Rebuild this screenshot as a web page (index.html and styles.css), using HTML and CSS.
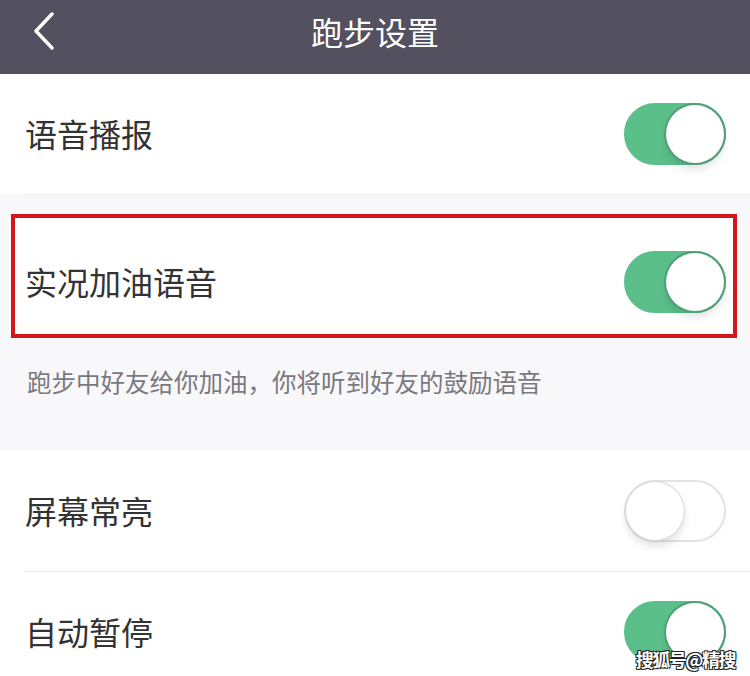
FILE: index.html
```html
<!doctype html>
<html>
<head>
<meta charset="utf-8">
<meta name="viewport" content="width=device-width, initial-scale=1.0">
<link rel="stylesheet" href="styles.css">
<title>跑步设置</title>
</head>
<body>
<div class="nav">
    <svg class="back" width="30" height="40" viewBox="0 0 30 40">
        <polyline points="19,2 3,19 19,36" fill="none" stroke="#fff" stroke-width="3.4" stroke-linecap="round" stroke-linejoin="round"/>
    </svg>
    <span class="title">跑步设置</span>
</div>

<div class="group">
    <div class="row">
        <span class="label">语音播报</span>
        <span class="switch on"><i></i></span>
    </div>
</div>
<div class="divider"></div>

<div class="gap"></div>
<div class="row marked">
    <span class="label">实况加油语音</span>
    <span class="switch on"><i></i></span>
</div>
<p class="caption">跑步中好友给你加油，你将听到好友的鼓励语音</p>

<div class="group">
    <div class="row tall">
        <span class="label">屏幕常亮</span>
        <span class="switch"><i></i></span>
    </div>
    <div class="divider"></div>
    <div class="row">
        <span class="label">自动暂停</span>
        <span class="switch on"><i></i></span>
    </div>
</div>

<div class="mark">搜狐号@精搜</div>
</body>
</html>
```

FILE: styles.css
```css
html, body {
    margin: 0;
    padding: 0;
}
body {
    width: 750px;
    height: 676px;
    overflow: hidden;
    position: relative;
    background-color: #f8f7fa;
    font-family: "Noto Sans CJK SC", "Noto Sans", sans-serif;
    color: #333;
}
.nav {
    height: 74px;
    background-color: #535060;
    display: flex;
    align-items: center;
    justify-content: center;
    position: relative;
}
.nav .back {
    position: absolute;
    left: 33px;
    top: 12px;
}
.nav .title {
    color: #fff;
    font-size: 32px;
    line-height: 1;
    margin-top: -12px;
}
.group {
    background-color: #fff;
}
.row {
    display: flex;
    align-items: center;
    justify-content: space-between;
    height: 120px;
    padding: 0 24px 0 25px;
    background-color: #fff;
}
.row.tall {
    height: 121px;
}
.label {
    font-size: 32px;
    line-height: 1;
    margin-top: -2px;
}
.divider {
    height: 1px;
    margin-left: 24px;
    background-color: #e9e8ec;
}
.group + .divider {
    background-color: #eeedf0;
}
.gap {
    height: 19px;
}
.row.marked {
    height: 116px;
    margin: 0 13px 0 11px;
    padding: 12px 7px 0 10px;
    box-sizing: content-box;
    height: 104px;
    border: 4px solid #d4161c;
}
.caption {
    margin: 0;
    height: 112px;
    padding: 28px 0 0 27px;
    box-sizing: border-box;
    font-size: 24.5px;
    line-height: 32px;
    color: #7a797e;
}
.switch {
    position: relative;
    width: 102px;
    height: 62px;
    border-radius: 31px;
    box-sizing: border-box;
    background-color: #fff;
    border: 2px solid #e3e3e6;
}
.switch i {
    position: absolute;
    top: 0;
    left: 0;
    width: 58px;
    height: 58px;
    border-radius: 50%;
    background-color: #fff;
    box-shadow: 0 0 0 1px #d8d8db, 0 6px 8px rgba(0, 0, 0, 0.12);
}
.switch.on {
    background-color: #5bbf89;
    border-color: #5bbf89;
}
.switch.on i {
    left: auto;
    right: 0;
    box-shadow: 0 0 0 2px #4f9f78, 0 6px 8px rgba(0, 0, 0, 0.12);
}
.mark {
    position: absolute;
    right: 15px;
    bottom: 8px;
    font-size: 18px;
    font-weight: bold;
    line-height: 1;
    color: #fff;
    letter-spacing: -1.5px;
    text-shadow: 1px 1px 0 #222, -1px -1px 0 #222, 1px -1px 0 #222, -1px 1px 0 #222;
}
```
